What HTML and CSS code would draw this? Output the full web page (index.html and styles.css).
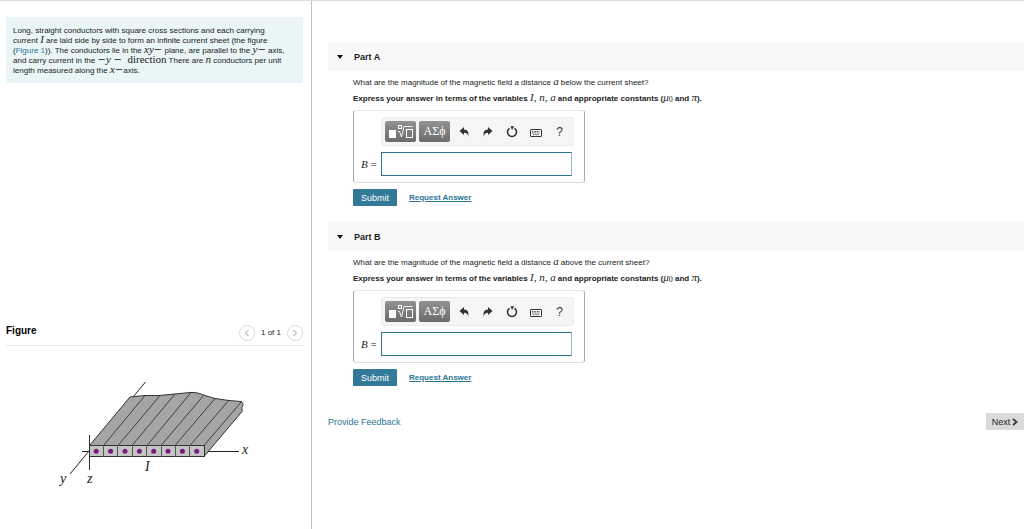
FILE: index.html
```
<!DOCTYPE html>
<html lang="en">
<head>
    <meta charset="UTF-8">
    <title>Infinite Current Sheet</title>
    <link rel="stylesheet" href="styles.css">
</head>
<body>
    <!-- shared toolbar icons -->
    <svg class="icon-defs" width="0" height="0">
        <symbol id="icon-template" viewBox="0 0 25 17">
            <rect x="1" y="7" width="7" height="8" fill="#fff"/>
            <rect x="10.500" y="2.500" width="3" height="3" fill="none" stroke="#fff"/>
            <path d="M10 8.500h1.500l2 5.500L16 3.500h8.500" fill="none" stroke="#fff" stroke-width=".9"/>
            <rect x="18.500" y="6.500" width="6" height="8" fill="none" stroke="#fff"/>
        </symbol>
        <symbol id="icon-undo" viewBox="0 0 12 12">
            <path d="M1.500 5 6 1v2.500c3.500.2 5 2.500 4.300 6.700C9.500 7.800 8.300 6.900 6 6.800V9z"/>
        </symbol>
        <symbol id="icon-redo" viewBox="0 0 12 12">
            <path d="M10.500 5 6 1v2.500C2.500 3.700 1 6 1.700 10.200 2.500 7.800 3.700 6.900 6 6.800V9z"/>
        </symbol>
        <symbol id="icon-reset" viewBox="0 0 12 12">
            <path d="M8.500 2.300A4.500 4.500 0 1 1 3.500 2.300" fill="none" stroke="#333" stroke-width="1.500"/>
            <path d="M4.500.2h3.700L6 4z"/>
        </symbol>
        <symbol id="icon-keyboard" viewBox="0 0 12 12">
            <rect x=".5" y="3.500" width="11" height="7" rx=".5" fill="#fff" stroke="#333"/>
            <path d="M2 5.500h8M2 7h8M3 8.700h6" fill="none" stroke="#444" stroke-dasharray="1 .6"/>
        </symbol>
    </svg>

    <div class="page">
        <aside class="sidebar">
            <section class="problem">
                <p class="intro">
                    Long, straight conductors with square cross sections and each carrying<br>
                    current <i class="math">I</i> are laid side by side to form an infinite current sheet (the figure<br>
                    (<a href="#figure">Figure 1</a>)). The conductors lie in the <span class="math"><i>xy</i><span class="minus">−</span></span> plane, are parallel to the <span class="math"><i>y</i><span class="minus">−</span></span> axis,<br>
                    and carry current in the <span class="math"><span class="minus">−</span><i>y</i> <span class="minus">−</span> &nbsp;direction</span> There are <i class="math">n</i> conductors per unit<br>
                    length measured along the <span class="math"><i>x</i><span class="minus">−</span></span>axis.
                </p>
            </section>

            <section class="figure" id="figure">
                <header class="figure-header">
                    <h2>Figure</h2>
                    <div class="pager">
                        <button type="button" aria-label="Previous figure"><svg width="6" height="8" viewBox="0 0 6 8"><path d="M4.500 1 1.500 4l3 3"/></svg></button>
                        <span>1 of 1</span>
                        <button type="button" aria-label="Next figure"><svg width="6" height="8" viewBox="0 0 6 8"><path d="m1.500 1 3 3-3 3"/></svg></button>
                    </div>
                </header>
                <svg class="drawing" width="210" height="125" viewBox="0 0 210 125">
                    <!-- axes -->
                    <path d="M95.500 12 83 27M39 81 20 104M32 81.500h8M154 81.500h35" stroke="#222"/>
                    <!-- sheet -->
                    <path class="sheet" d="M39.500 75.500 80 27l15-1.500 14 0 16-1.500 15-1.500c6-.5 10 1 15 3l10 3 14 2 12 1c3 2 2 4 1 6v4L154 86.500V75.500z"/>
                    <g stroke="#333" stroke-width=".9" fill="none">
                        <path d="M53.500 75.500 95 25.500M68 75.500 110 25.500M82 75.500 125 24M97 75.500 141 22.500M111 75.500 154 25M125 75.500 165 28.500M140 75.500 179 30M154 75.500 192 31"/>
                    </g>
                    <rect class="front" x="39.500" y="75.500" width="115" height="11"/>
                    <path d="M53.500 75v12M67.500 75v12M82.500 75v12M96.500 75v12M111.500 75v12M125.500 75v12M139.500 75v12" stroke="#555"/>
                    <path d="M39.500 65v35" stroke="#333"/>
                    <g fill="#7b1a7e">
                        <circle cx="46.200" cy="81.200" r="2.500"/>
                        <circle cx="60.600" cy="81.200" r="2.500"/>
                        <circle cx="75" cy="81.200" r="2.500"/>
                        <circle cx="89.400" cy="81.200" r="2.500"/>
                        <circle cx="103.700" cy="81.200" r="2.500"/>
                        <circle cx="118" cy="81.200" r="2.500"/>
                        <circle cx="132.400" cy="81.200" r="2.500"/>
                        <circle cx="146.700" cy="81.200" r="2.500"/>
                    </g>
                    <text x="192" y="84">x</text>
                    <text x="10" y="113">y</text>
                    <text x="37" y="113">z</text>
                    <text x="95" y="101">I</text>
                </svg>
            </section>
        </aside>

        <main class="content">
            <section class="part">
                <header class="part-header"><span class="arrow"></span><h2>Part A</h2></header>
                <form class="part-body">
                    <p>What are the magnitude of the magnetic field a distance <i class="math">a</i> below the current sheet?</p>
                    <p class="instructions">Express your answer in terms of the variables <span class="math"><i>I</i>, <i>n</i>, <i>a</i></span> and appropriate constants (<span class="math"><i>μ</i><sub>0</sub></span> and <i class="math">π</i>).</p>
                    <div class="answer">
                        <div class="toolbar">
                            <button type="button" class="dark" aria-label="Templates"><svg width="25" height="17"><use href="#icon-template"/></svg></button>
                            <button type="button" class="dark">ΑΣϕ</button>
                            <button type="button" class="tool" aria-label="Undo"><svg width="12" height="12"><use href="#icon-undo"/></svg></button>
                            <button type="button" class="tool" aria-label="Redo"><svg width="12" height="12"><use href="#icon-redo"/></svg></button>
                            <button type="button" class="tool" aria-label="Reset"><svg width="12" height="12"><use href="#icon-reset"/></svg></button>
                            <button type="button" class="tool" aria-label="Keyboard"><svg width="12" height="12"><use href="#icon-keyboard"/></svg></button>
                            <button type="button" class="tool">?</button>
                        </div>
                        <label for="answerA"><i>B</i> =</label>
                        <input type="text" id="answerA">
                    </div>
                    <div class="actions">
                        <button type="button" class="submit">Submit</button>
                        <a href="#">Request Answer</a>
                    </div>
                </form>
            </section>

            <section class="part">
                <header class="part-header"><span class="arrow"></span><h2>Part B</h2></header>
                <form class="part-body">
                    <p>What are the magnitude of the magnetic field a distance <i class="math">a</i> above the current sheet?</p>
                    <p class="instructions">Express your answer in terms of the variables <span class="math"><i>I</i>, <i>n</i>, <i>a</i></span> and appropriate constants (<span class="math"><i>μ</i><sub>0</sub></span> and <i class="math">π</i>).</p>
                    <div class="answer">
                        <div class="toolbar">
                            <button type="button" class="dark" aria-label="Templates"><svg width="25" height="17"><use href="#icon-template"/></svg></button>
                            <button type="button" class="dark">ΑΣϕ</button>
                            <button type="button" class="tool" aria-label="Undo"><svg width="12" height="12"><use href="#icon-undo"/></svg></button>
                            <button type="button" class="tool" aria-label="Redo"><svg width="12" height="12"><use href="#icon-redo"/></svg></button>
                            <button type="button" class="tool" aria-label="Reset"><svg width="12" height="12"><use href="#icon-reset"/></svg></button>
                            <button type="button" class="tool" aria-label="Keyboard"><svg width="12" height="12"><use href="#icon-keyboard"/></svg></button>
                            <button type="button" class="tool">?</button>
                        </div>
                        <label for="answerB"><i>B</i> =</label>
                        <input type="text" id="answerB">
                    </div>
                    <div class="actions">
                        <button type="button" class="submit">Submit</button>
                        <a href="#">Request Answer</a>
                    </div>
                </form>
            </section>

            <footer class="footer">
                <a href="#">Provide Feedback</a>
                <button type="button" class="next">Next <svg width="6" height="8" viewBox="0 0 6 8"><path d="m1 .8 3.500 3.200L1 7.200" fill="none" stroke="#333" stroke-width="1.800"/></svg></button>
            </footer>
        </main>
    </div>
</body>
</html>
```
FILE: styles.css
```
* {
    box-sizing: border-box;
}

body {
    margin: 0;
    background-color: #fff;
    color: #222;
    font-family: "Liberation Sans", Arial, sans-serif;
    font-size: 8px;
    line-height: 10px;
}

h2, p {
    margin: 0;
}

a {
    color: #2b7596;
    text-decoration: none;
}

button {
    padding: 0;
    border: none;
    font-family: inherit;
    color: inherit;
}

svg {
    display: block;
}

.icon-defs {
    position: absolute;
}

.page {
    display: flex;
    min-height: 100vh;
    border-top: 1px solid #ddd;
}

/* left column */
.sidebar {
    flex: 0 0 312px;
    padding: 16px 8px 0 6px;
    border-right: 1px solid #bcc4cd;
}

.problem {
    min-height: 306px;
}

.intro {
    padding: 9px 7px 7px;
    background-color: #e9f5f7;
    white-space: nowrap;
}

.math {
    font-family: "Liberation Serif", serif;
    font-size: 11px;
    font-weight: normal;
    line-height: 1px;
}

.minus {
    font-family: "DejaVu Serif", serif;
    font-size: 10px;
}

.math sub {
    font-size: 8px;
    line-height: 1px;
    vertical-align: -1px;
}

.figure-header {
    display: flex;
    justify-content: space-between;
    height: 23px;
    border-bottom: 1px solid #e6e6e6;
}

.figure-header h2 {
    font-size: 10px;
    line-height: 16px;
    color: #000;
}

.pager {
    display: flex;
    align-items: center;
    gap: 6px;
    height: 20px;
}

.pager button {
    display: flex;
    align-items: center;
    justify-content: center;
    width: 16px;
    height: 16px;
    border: 1px solid #ddd;
    border-radius: 50%;
    background-color: #fff;
}

.pager path {
    fill: none;
    stroke: #999;
}

.drawing {
    margin: 24px 0 0 44px;
}

.drawing text {
    font-family: "Liberation Serif", serif;
    font-size: 14px;
    font-style: italic;
    fill: #222;
}

.sheet {
    fill: #a5a5a5;
    stroke: #333;
}

.front {
    fill: #c4c4c4;
    stroke: #333;
}

/* right column */
.content {
    flex: 1;
    padding: 41px 0 0 16px;
}

.part {
    margin-bottom: 16px;
}

.part-header {
    display: flex;
    align-items: center;
    gap: 11px;
    height: 29px;
    padding-left: 9px;
    background-color: #f8f8f8;
}

.part-header h2 {
    font-size: 9px;
}

.arrow {
    border: 3px solid transparent;
    border-top: 4px solid #111;
    border-bottom: none;
}

.part-body {
    padding: 7px 0 0 25px;
}

.part-body p {
    margin-bottom: 6px;
}

.part-body .instructions {
    font-weight: bold;
}

.answer {
    display: grid;
    grid-template-columns: 20px 191px;
    row-gap: 6px;
    align-items: center;
    width: 232px;
    padding: 6px 7px;
    border: 1px solid #aaa;
    border-top-color: #e6e6e6;
    border-bottom-color: #ddd;
    border-radius: 3px;
}

.toolbar {
    grid-column: 2;
    display: flex;
    align-items: center;
    gap: 3px;
    width: 193px;
    height: 29px;
    padding: 0 3px;
    border: 1px solid #ebebeb;
    border-radius: 3px;
    background-color: #f5f5f5;
}

.toolbar .dark {
    display: flex;
    align-items: center;
    justify-content: center;
    width: 31px;
    height: 21px;
    border-radius: 2px;
    background: linear-gradient(#929295, #6b6b6e);
    color: #fff;
    font-family: "Liberation Serif", serif;
    font-size: 12px;
}

.toolbar .tool {
    display: flex;
    align-items: center;
    justify-content: center;
    width: 21px;
    height: 21px;
    background: none;
    color: #333;
    fill: #333;
    font-size: 12px;
}

.answer label {
    font-family: "Liberation Serif", serif;
    font-size: 11px;
    white-space: nowrap;
}

.answer input {
    width: 100%;
    height: 24px;
    padding: 0 4px;
    border: 1px solid #2b7596;
    border-right-color: #8fbccc;
    background-color: #fff;
    font: inherit;
}

.actions {
    display: flex;
    gap: 12px;
    margin-top: 6px;
}

.submit {
    width: 44px;
    height: 17px;
    border-radius: 1px;
    background-color: #337a99;
    color: #fff;
    font-size: 9px;
}

.actions a {
    align-self: center;
    font-weight: bold;
    text-decoration: underline;
}

.footer {
    display: flex;
    align-items: center;
    justify-content: space-between;
    margin-top: 27px;
}

.footer a {
    font-size: 9px;
}

.next {
    display: flex;
    align-items: center;
    justify-content: center;
    gap: 2px;
    width: 38px;
    height: 17px;
    background-color: #dadada;
    font-size: 9px;
}
```
